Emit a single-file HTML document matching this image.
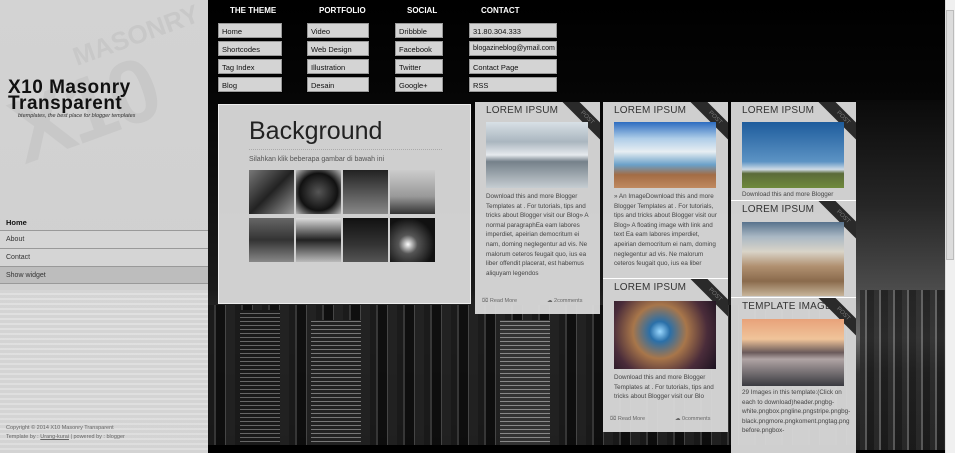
<!DOCTYPE html>
<html><head><meta charset="utf-8"><style>
*{margin:0;padding:0;box-sizing:border-box}
body{width:955px;height:453px;overflow:hidden;position:relative;font-family:"Liberation Sans",sans-serif;background:#000}
.abs{position:absolute}
#side{left:0;top:0;width:208px;height:453px;background:linear-gradient(#d3d3d3 0,#d0d0d0 290px,#cfcfcf 300px,#c8c8c8 453px)}
#main{left:208px;top:0;width:737px;height:453px;background:linear-gradient(#000 0,#050505 90px,#111 200px,#1a1a1a 290px,#2a2a2a 320px,#151515 453px)}
.city{background:repeating-linear-gradient(90deg,#1a1a1a 0 6px,#3a3a3a 6px 8px,#0d0d0d 8px 17px,#4a4a4a 17px 18px,#222 18px 27px),#1a1a1a}
#sky{left:856px;top:100px;width:89px;height:350px;background:linear-gradient(#0a0a0a,#262626 30%,#4d4d4d 55%,#6a6a6a 68%,#333 78%,#1c1c1c)}
#scroll{left:945px;top:0;width:10px;height:453px;background:#f0f0f0;border-left:1px solid #ddd}
#thumb{left:946px;top:10px;width:8px;height:250px;background:#dcdcdc;border:1px solid #bbb}
.nh{color:#fff;font-weight:bold;font-size:8px;top:6px}
.nb{background:#d4d4d4;border:1px solid #999;height:15px;font-size:7.5px;color:#111;padding:3px 0 0 3px;outline:1px solid #000}
.card{background:rgba(218,218,218,.95);overflow:hidden}
.card h3{position:absolute;left:11px;top:3px;font-weight:normal;font-size:10px;color:#333;letter-spacing:.2px}
.rib{position:absolute;width:70px;height:12px;background:#2a2a2a;transform:rotate(45deg);right:-22px;top:10px;color:#777;font-size:6px;text-align:center;line-height:12px}
.pimg{position:absolute;left:11px;width:102px;height:66px}
.txt{position:absolute;left:11px;width:106px;font-size:6.3px;line-height:9.6px;color:#444}
.foot{position:absolute;left:7px;font-size:5.5px;color:#666}
.g{position:absolute;width:45px;height:44px}
</style></head><body>
<div id="side" class="abs"></div>
<div class="abs" style="left:0;top:290px;width:208px;height:163px;background:repeating-linear-gradient(0deg,#d6d6d6 0 3px,#e4e4e4 3px 5px);opacity:.8"></div>
<div class="abs" style="left:10px;top:60px;font-size:90px;font-weight:bold;color:#c8c8c8;transform:rotate(-20deg);letter-spacing:-4px">X10</div>
<div class="abs" style="left:70px;top:20px;font-size:26px;font-weight:bold;color:#c8c8c8;transform:rotate(-20deg)">MASONRY</div>
<div class="abs" style="left:8px;top:80px;font-size:19px;font-weight:bold;color:#111;line-height:16px;letter-spacing:.5px">X10 Masonry<br>Transparent</div>
<div class="abs" style="left:18px;top:113px;font-size:5.5px;color:#333;font-style:italic">btemplates, the best place for blogger templates</div>
<div class="abs" style="left:6px;top:218px;font-size:7.5px;color:#111;font-weight:bold">Home</div>
<div class="abs" style="left:0;top:230px;width:208px;height:18px;border-top:1px solid #999;font-size:7px;color:#333;padding:5px 6px;background:#d5d5d5">About</div>
<div class="abs" style="left:0;top:248px;width:208px;height:18px;border-top:1px solid #999;font-size:7px;color:#333;padding:5px 6px;background:#d5d5d5">Contact</div>
<div class="abs" style="left:0;top:266px;width:208px;height:18px;border-top:1px solid #999;border-bottom:1px solid #999;font-size:7px;color:#333;padding:5px 6px;background:#bdbdbd">Show widget</div>
<div class="abs" style="left:6px;top:424px;font-size:5.5px;color:#666;line-height:9px">Copyright © 2014 X10 Masonry Transparent<br>Template by : <u>Urang-kurai</u> | powered by : blogger</div>

<div id="main" class="abs"></div>
<div class="abs city" style="left:208px;top:305px;width:650px;height:148px;opacity:.9"></div>
<div class="abs" style="left:240px;top:310px;width:40px;height:140px;background:repeating-linear-gradient(0deg,#666 0 1px,#1a1a1a 1px 4px)"></div>
<div class="abs" style="left:311px;top:320px;width:50px;height:130px;background:repeating-linear-gradient(0deg,#777 0 1px,#222 1px 4px)"></div>
<div class="abs" style="left:500px;top:320px;width:50px;height:130px;background:repeating-linear-gradient(0deg,#888 0 1px,#333 1px 4px)"></div>
<div class="abs" style="left:208px;top:445px;width:737px;height:8px;background:#000"></div>
<div id="sky" class="abs"></div>
<div class="abs" style="left:860px;top:290px;width:85px;height:160px;background:repeating-linear-gradient(90deg,#2a2a2a 0 5px,#666 5px 7px,#1a1a1a 7px 14px);opacity:.8"></div>

<div class="abs nh" style="left:230px">THE THEME</div>
<div class="abs nh" style="left:319px">PORTFOLIO</div>
<div class="abs nh" style="left:407px">SOCIAL</div>
<div class="abs nh" style="left:481px">CONTACT</div>
<div class="abs nb" style="left:218px;top:23px;width:64px">Home</div>
<div class="abs nb" style="left:218px;top:41px;width:64px">Shortcodes</div>
<div class="abs nb" style="left:218px;top:59px;width:64px">Tag Index</div>
<div class="abs nb" style="left:218px;top:77px;width:64px">Blog</div>
<div class="abs nb" style="left:307px;top:23px;width:62px">Video</div>
<div class="abs nb" style="left:307px;top:41px;width:62px">Web Design</div>
<div class="abs nb" style="left:307px;top:59px;width:62px">Illustration</div>
<div class="abs nb" style="left:307px;top:77px;width:62px">Desain</div>
<div class="abs nb" style="left:395px;top:23px;width:48px">Dribbble</div>
<div class="abs nb" style="left:395px;top:41px;width:48px">Facebook</div>
<div class="abs nb" style="left:395px;top:59px;width:48px">Twitter</div>
<div class="abs nb" style="left:395px;top:77px;width:48px">Google+</div>
<div class="abs nb" style="left:469px;top:23px;width:88px">31.80.304.333</div>
<div class="abs nb" style="left:469px;top:41px;width:88px;font-size:7px">blogazineblog@ymail.com</div>
<div class="abs nb" style="left:469px;top:59px;width:88px">Contact Page</div>
<div class="abs nb" style="left:469px;top:77px;width:88px">RSS</div>

<div class="abs card" style="left:218px;top:104px;width:253px;height:200px;border:1px solid #eee">
<div class="abs" style="left:30px;top:12px;font-size:25px;color:#222">Background</div>
<div class="abs" style="left:30px;top:44px;width:193px;border-top:1px dotted #aaa"></div>
<div class="abs" style="left:30px;top:51px;font-size:7px;color:#555">Silahkan klik beberapa gambar di bawah ini</div>
<div class="g" style="left:30px;top:65px;background:linear-gradient(135deg,#777,#222 50%,#999)"></div>
<div class="g" style="left:77px;top:65px;background:radial-gradient(#555,#111 60%,#bbb)"></div>
<div class="g" style="left:124px;top:65px;background:linear-gradient(#222,#555 50%,#888)"></div>
<div class="g" style="left:171px;top:65px;background:linear-gradient(#ccc,#999 60%,#333)"></div>
<div class="g" style="left:30px;top:113px;background:linear-gradient(#666,#333 50%,#888)"></div>
<div class="g" style="left:77px;top:113px;background:linear-gradient(#ddd,#222 50%,#bbb)"></div>
<div class="g" style="left:124px;top:113px;background:linear-gradient(#111,#333 60%,#555)"></div>
<div class="g" style="left:171px;top:113px;background:radial-gradient(circle at 40% 60%,#fff,#555 25%,#111 70%)"></div>
</div>

<div class="abs card" style="left:475px;top:102px;width:125px;height:212px">
<h3>LOREM IPSUM</h3><div class="rib">POST</div>
<div class="pimg" style="top:20px;background:linear-gradient(#d8e0e6,#aab6bf 30%,#e6eaee 50%,#75818a 60%,#c6cdd2)"></div>
<div class="txt" style="top:90px">Download this and more Blogger Templates at . For tutorials, tips and tricks about Blogger visit our Blog» A normal paragraphEa eam labores imperdiet, apeirian democritum ei nam, doming neglegentur ad vis. Ne malorum ceteros feugait quo, ius ea liber offendit placerat, est habemus aliquyam legendos</div>
<div class="foot" style="top:196px">⌧ Read More</div><div class="foot" style="left:72px;top:196px">☁ 2comments</div>
</div>

<div class="abs card" style="left:603px;top:102px;width:125px;height:176px">
<h3>LOREM IPSUM</h3><div class="rib">POST</div>
<div class="pimg" style="top:20px;background:linear-gradient(#2d6cc0,#aecde8 25%,#e7eef2 45%,#6aa0c8 65%,#a36c45 80%,#c08a60)"></div>
<div class="txt" style="top:90px">» An ImageDownload this and more Blogger Templates at . For tutorials, tips and tricks about Blogger visit our Blog» A floating image with link and text Ea eam labores imperdiet, apeirian democritum ei nam, doming neglegentur ad vis. Ne malorum ceteros feugait quo, ius ea liber</div>
</div>
<div class="abs card" style="left:603px;top:278px;width:125px;height:154px;border-top:1px solid #fff">
<h3>LOREM IPSUM</h3><div class="rib">POST</div>
<div class="pimg" style="top:22px;height:68px;background:radial-gradient(circle at 45% 45%,#9ad8ff,#2a6fa8 15%,#a8764a 40%,#4a2c3a 70%,#1b1220)"></div>
<div class="txt" style="top:94px">Download this and more Blogger Templates at . For tutorials, tips and tricks about Blogger visit our Blo</div>
<div class="foot" style="top:137px">⌧ Read More</div><div class="foot" style="left:72px;top:137px">☁ 0comments</div>
</div>

<div class="abs card" style="left:731px;top:102px;width:125px;height:98px">
<h3>LOREM IPSUM</h3><div class="rib">POST</div>
<div class="pimg" style="top:20px;background:linear-gradient(#1e5c9c,#5c93c4 60%,#cfdbe6 72%,#5b6b3a 78%,#6f8a3c)"></div>
<div class="txt" style="top:88px">Download this and more Blogger</div>
</div>
<div class="abs card" style="left:731px;top:200px;width:125px;height:97px;border-top:1px solid #fff">
<h3>LOREM IPSUM</h3><div class="rib">POST</div>
<div class="pimg" style="top:21px;height:74px;background:linear-gradient(#57728c,#aab8c4 20%,#d9d4c8 40%,#b09070 60%,#8a6a4c 80%,#c7b49a)"></div>
</div>
<div class="abs card" style="left:731px;top:297px;width:125px;height:156px;border-top:1px solid #fff">
<h3>TEMPLATE IMAGES</h3><div class="rib">POST</div>
<div class="pimg" style="top:21px;height:67px;background:linear-gradient(#e8a27a,#f0c49a 30%,#6a5a5a 50%,#b0a4a4 60%,#3a3a40)"></div>
<div class="txt" style="top:90px">29 Images in this template:(Click on each to download)header.pngbg-white.pngbox.pngline.pngstripe.pngbg-black.pngmore.pngkoment.pngtag.png before.pngbox-</div>
</div>

<div id="scroll" class="abs"></div>
<div id="thumb" class="abs"></div>
</body></html>
